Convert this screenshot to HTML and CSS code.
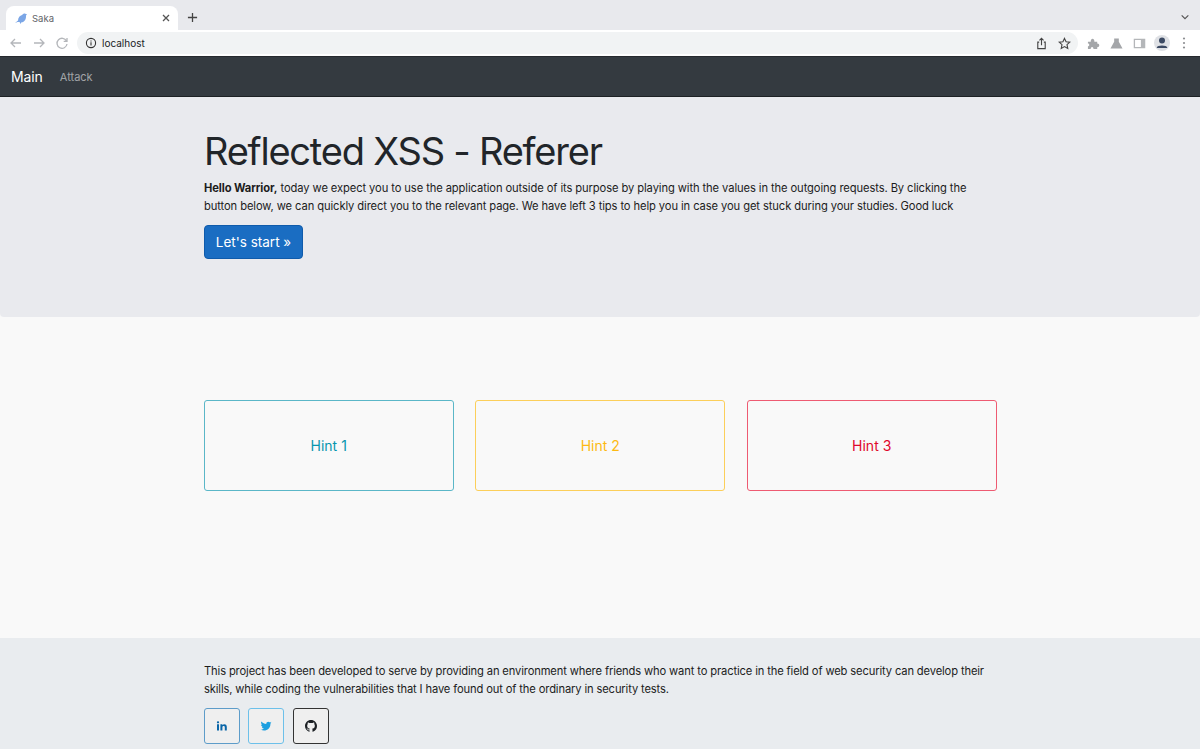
FILE: index.html
```html
<!DOCTYPE html>
<html lang="en">
<head>
<meta charset="utf-8">
<title>Saka</title>
<link rel="stylesheet" href="styles.css">
</head>
<body>
<div class="tabstrip">
  <div class="tab">
    <svg class="favicon" viewBox="0 0 12 11"><path d="M0 10 L3 7.5 C3 4.5 5 2.5 7 2 C8 0.5 10 0 11 1 L12 1.2 L11 2.4 C11.4 6 9.5 9 6.5 9.3 L5.4 11 L4.6 9 L2.6 9 Z" fill="#7ba6e6"/></svg>
    <span class="tab-title">Saka</span>
    <svg class="tab-close" viewBox="0 0 10 10"><path d="M2 2 L8 8 M8 2 L2 8" stroke="#555" stroke-width="1.3"/></svg>
  </div>
  <svg class="new-tab" viewBox="0 0 12 12"><path d="M6 1 V11 M1 6 H11" stroke="#444" stroke-width="1.4"/></svg>
  <svg class="tab-menu" viewBox="0 0 12 12"><path d="M2 4 L6 8 L10 4" stroke="#555" stroke-width="1.4" fill="none"/></svg>
</div>
<div class="toolbar">
  <svg class="tool-icon" viewBox="0 0 14 14"><path d="M12 7 H2 M6 3 L2 7 L6 11" stroke="#b4b6ba" stroke-width="1.3" fill="none"/></svg>
  <svg class="tool-icon" viewBox="0 0 14 14"><path d="M2 7 H12 M8 3 L12 7 L8 11" stroke="#b4b6ba" stroke-width="1.3" fill="none"/></svg>
  <svg class="tool-icon" viewBox="0 0 14 14"><path d="M11.5 5 A5 5 0 1 0 12 8 M12 2 V5.3 H8.7" stroke="#b4b6ba" stroke-width="1.3" fill="none"/></svg>
  <div class="omnibox">
    <svg class="info" viewBox="0 0 12 12"><circle cx="6" cy="6" r="4.6" stroke="#333" stroke-width="1.1" fill="none"/><path d="M6 5.3 V8.6 M6 3.4 V4.5" stroke="#333" stroke-width="1.1"/></svg>
    <span class="url">localhost</span>
    <span class="spacer"></span>
    <svg class="omni-icon" viewBox="0 0 14 14"><path d="M4.5 5.5 H3 V12.5 H11 V5.5 H9.5 M7 9 V1.5 M4.8 3.7 L7 1.5 L9.2 3.7" stroke="#444" stroke-width="1.2" fill="none"/></svg>
    <svg class="omni-icon" viewBox="0 0 14 14"><path d="M7 1.5 L8.7 5.2 L12.7 5.6 L9.7 8.3 L10.5 12.3 L7 10.3 L3.5 12.3 L4.3 8.3 L1.3 5.6 L5.3 5.2 Z" stroke="#444" stroke-width="1.2" fill="none"/></svg>
  </div>
  <div class="extensions">
    <svg class="ext" viewBox="0 0 14 14"><path d="M1 5 H4 C4 1 8 1 8 5 H11 V7 C14 7 14 11 11 11 V13 H7 C7 10 4 10 4 13 H1 V10 C3 10 3 7 1 7 Z" fill="#a4a6a9"/></svg>
    <svg class="ext" viewBox="0 0 14 14"><path d="M4.5 1.5 H9.5 V5 L13.5 12.5 H0.5 L4.5 5 Z" fill="#a4a6a9"/></svg>
    <svg class="ext" viewBox="0 0 14 14"><path d="M1.5 2.5 H12.5 V11.5 H1.5 Z" fill="none" stroke="#b4b6b9" stroke-width="1.4"/><path d="M8.5 2.5 H12.5 V11.5 H8.5 Z" fill="#b4b6b9"/></svg>
    <span class="avatar"><svg viewBox="0 0 16 16"><circle cx="8" cy="5.6" r="3" fill="#3c4a63"/><path d="M2.6 13 C3 9.8 13 9.8 13.4 13 Z" fill="#3c4a63"/></svg></span>
    <svg class="dots" viewBox="0 0 4 14"><circle cx="2" cy="2.5" r="1.1" fill="#8d8f92"/><circle cx="2" cy="7" r="1.1" fill="#8d8f92"/><circle cx="2" cy="11.5" r="1.1" fill="#8d8f92"/></svg>
  </div>
</div>
<nav class="navbar">
  <a class="brand">Main</a>
  <a class="nav-link">Attack</a>
</nav>
<main>
  <section class="hero">
    <div class="container">
      <h1>Reflected XSS - Referer</h1>
      <p class="lead"><strong>Hello Warrior,</strong> today we expect you to use the application outside of its purpose by playing with the values in the outgoing requests. By clicking the button below, we can quickly direct you to the relevant page. We have left 3 tips to help you in case you get stuck during your studies. Good luck</p>
      <a class="start">Let's start »</a>
    </div>
  </section>
  <section class="hints">
    <div class="container hint-grid">
      <div class="hint hint-info">Hint 1</div>
      <div class="hint hint-warning">Hint 2</div>
      <div class="hint hint-danger">Hint 3</div>
    </div>
  </section>
  <footer class="footer">
    <div class="container">
      <p class="about">This project has been developed to serve by providing an environment where friends who want to practice in the field of web security can develop their skills, while coding the vulnerabilities that I have found out of the ordinary in security tests.</p>
      <div class="socials">
        <a class="social linkedin"><svg viewBox="0 0 12 12"><path d="M1 4.2 H3 V10.5 H1 Z M2 1.2 A1.15 1.15 0 1 1 2 3.5 A1.15 1.15 0 1 1 2 1.2 Z M4.4 4.2 H6.3 V5.1 C7.4 3.6 10.8 3.6 10.8 6.8 V10.5 H8.8 V7.2 C8.8 5.5 6.4 5.5 6.4 7.2 V10.5 H4.4 Z" fill="#0a66a8"/></svg></a>
        <a class="social twitter"><svg viewBox="0 0 12 12"><path d="M11.5 2.6 C11.1 2.8 10.7 2.9 10.2 3 C10.7 2.7 11 2.3 11.2 1.7 C10.7 2 10.2 2.2 9.7 2.3 C8.4 0.9 5.9 2.1 6.3 4.1 C4.4 4 2.6 3.1 1.4 1.6 C0.8 2.7 1.1 4 2.1 4.7 C1.7 4.7 1.3 4.6 1 4.4 C1 5.6 1.8 6.6 3 6.8 C2.6 6.9 2.3 6.9 1.9 6.9 C2.3 7.9 3.1 8.5 4.2 8.6 C3.1 9.4 1.8 9.8 0.5 9.6 C5.5 12.4 10.8 8.8 10.4 3.7 C10.8 3.4 11.2 3 11.5 2.6 Z" fill="#1c9fe0"/></svg></a>
        <a class="social github"><svg viewBox="0 0 16 16"><path fill-rule="evenodd" d="M8 0C3.58 0 0 3.58 0 8c0 3.54 2.29 6.53 5.47 7.59.4.07.55-.17.55-.38 0-.19-.01-.82-.01-1.49-2.01.37-2.53-.49-2.69-.94-.09-.23-.48-.94-.82-1.13-.28-.15-.68-.52-.01-.53.63-.01 1.08.58 1.23.82.72 1.21 1.87.87 2.33.66.07-.52.28-.87.51-1.07-1.78-.2-3.64-.89-3.64-3.95 0-.87.31-1.59.82-2.15-.08-.2-.36-1.02.08-2.12 0 0 .67-.21 2.2.82.64-.18 1.32-.27 2-.27s1.36.09 2 .27c1.53-1.04 2.2-.82 2.2-.82.44 1.1.16 1.92.08 2.12.51.56.82 1.27.82 2.15 0 3.07-1.87 3.75-3.65 3.95.29.25.54.73.54 1.48 0 1.07-.01 1.93-.01 2.2 0 .21.15.46.55.38A8.01 8.01 0 0 0 16 8c0-4.42-3.58-8-8-8z" fill="#1b1f23"/></svg></a>
      </div>
    </div>
  </footer>
</main>
</body>
</html>
```
FILE: styles.css
```css
* { box-sizing: border-box; }
html, body { margin: 0; padding: 0; height: 749px; overflow: hidden; }
body {
  font-family: Inter, "Liberation Sans", sans-serif;
  color: #212529;
  background: #f8f8f8;
}
.tabstrip {
  height: 30px;
  background: #e8e9ed;
  display: flex;
  align-items: flex-end;
  padding-left: 6px;
}
.tab {
  width: 172px;
  height: 24px;
  background: #fff;
  border-radius: 8px 8px 0 0;
  display: flex;
  align-items: center;
  padding: 0 7px 0 9px;
}
.favicon { width: 12px; height: 11px; }
.tab-title { font-size: 9.5px; color: #5f6368; margin-left: 5px; flex: 1; }
.tab-close { width: 10px; height: 10px; }
.new-tab { width: 11px; height: 11px; margin: 0 0 7px 9px; }
.tab-menu { width: 10px; height: 10px; margin: 0 10px 8px auto; }
.toolbar {
  height: 26px;
  background: #fff;
  display: flex;
  align-items: center;
  padding: 0 0 0 9px;
}
.tool-icon { width: 14px; height: 14px; margin-right: 9px; }
.toolbar .tool-icon:nth-child(3) { margin-right: 8px; }
.omnibox {
  width: 1001px;
  height: 22px;
  border-radius: 11px;
  background: #f1f3f4;
  display: flex;
  align-items: center;
  padding: 0 7px 0 8px;
}
.info { width: 12px; height: 12px; }
.url { font-size: 10px; color: #202124; margin-left: 5px; }
.spacer { flex: 1; }
.omni-icon { width: 13px; height: 13px; }
.omni-icon + .omni-icon { margin-left: 10px; }
.extensions { display: flex; align-items: center; margin-left: 9px; gap: 10px; }
.ext { width: 13px; height: 13px; }
.avatar { width: 16px; height: 16px; border-radius: 50%; background: #dfe1e5; display: block; margin-left: -2px; }
.avatar svg { display: block; width: 16px; height: 16px; }
.dots { width: 4px; height: 14px; margin-left: 2px; }
.navbar {
  height: 41px;
  background: #343a40;
  border-bottom: 1px solid #1d2124;
  border-top: 1px solid #26292e;
  display: flex;
  align-items: center;
  padding: 0 11px;
}
.brand { color: #fff; font-size: 14px; letter-spacing: -0.1px; margin-right: 17px; }
.nav-link { color: rgba(255,255,255,.55); font-size: 11px; }
.container { width: 793px; margin-left: 204px; }
.hero {
  height: 220px;
  background-color: #e9eaee;
  border-bottom-left-radius: 4px;
  border-bottom-right-radius: 4px;
  padding-top: 31px;
}
h1 {
  font-size: 38px;
  font-weight: 400;
  letter-spacing: -1.22px;
  line-height: 46px;
  margin: 0;
  color: #212529;
}
.lead {
  font-size: 11.2px;
  letter-spacing: -0.1px;
  line-height: 18px;
  margin: 5px 0 0;
  color: #1c1c1c;
}
.lead strong { font-weight: 700; }
.start {
  display: inline-block;
  margin-top: 10px;
  width: 99px;
  height: 34px;
  line-height: 32px;
  text-align: center;
  background: #1a6dc2;
  border: 1px solid #0f5bab;
  border-radius: 4px;
  color: #fff;
  font-size: 13.5px;
}
.hints { height: 321px; background: #f9f9f9; padding-top: 83px; }
.hint-grid { display: grid; grid-template-columns: repeat(3, 250px); column-gap: 21.5px; margin-left: 203.7px; }
.hint {
  height: 91px;
  border: 1px solid;
  border-radius: 3px;
  display: flex;
  align-items: center;
  justify-content: center;
  font-size: 14px;
}
.hint-info { color: #0796ae; border-color: #5bb7c8; }
.hint-warning { color: #fdb913; border-color: #fccf5a; }
.hint-danger { color: #e0082c; border-color: #ee5b72; }
.footer { height: 111px; background: #e9ecef; padding-top: 24px; }
.about { font-size: 11.2px; letter-spacing: -0.14px; line-height: 18px; margin: 0; color: #1c1c1c; }
.socials { display: flex; gap: 8.4px; margin-top: 10px; }
.social {
  width: 36px;
  height: 36px;
  border: 1px solid;
  border-radius: 3px;
  background: #efefef;
  display: flex;
  align-items: center;
  justify-content: center;
}
.social svg { width: 12px; height: 12px; }
.linkedin { border-color: #5d9cc9; }
.twitter { border-color: #6cc0ea; }
.github { border-color: #333; }
```
